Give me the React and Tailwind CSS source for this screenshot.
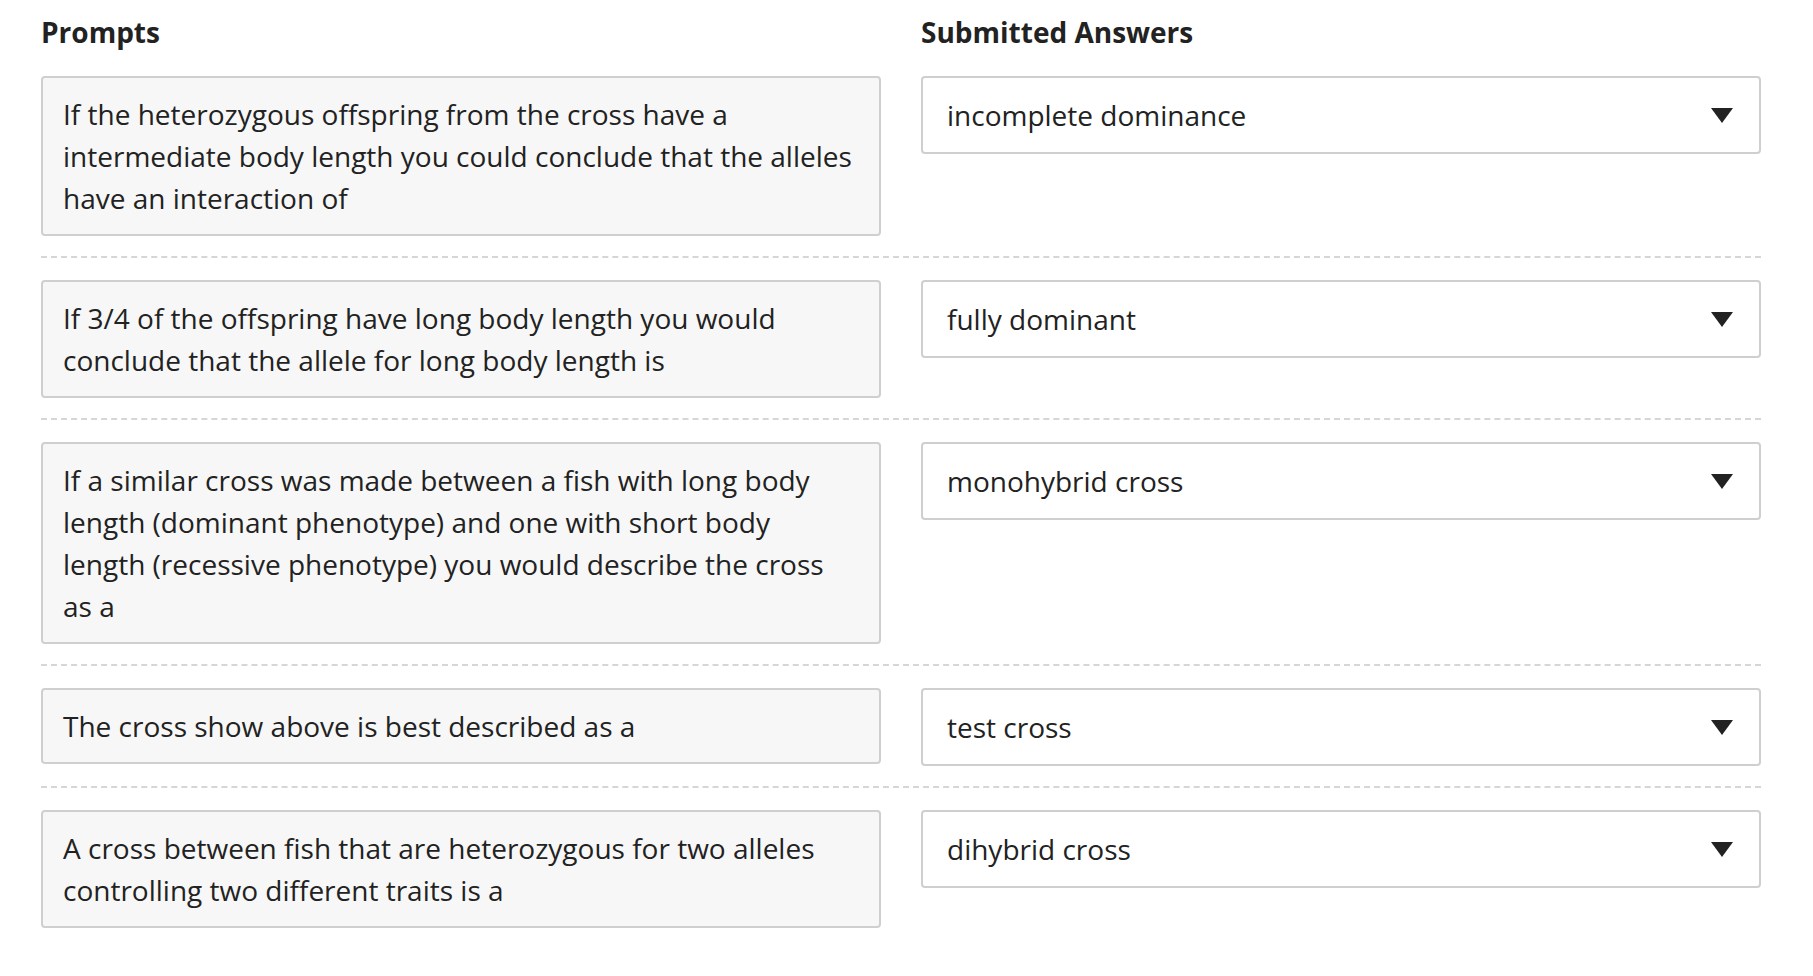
const rows = [
  {
    prompt:
      'If the heterozygous offspring from the cross have a intermediate body length you could conclude that the alleles have an interaction of',
    answer: 'incomplete dominance',
  },
  {
    prompt: 'If 3/4 of the offspring have long body length you would conclude that the allele for long body length is',
    answer: 'fully dominant',
  },
  {
    prompt:
      'If a similar cross was made between a fish with long body length (dominant phenotype) and one with short body length (recessive phenotype) you would describe the cross as a',
    answer: 'monohybrid cross',
  },
  {
    prompt: 'The cross show above is best described as a',
    answer: 'test cross',
  },
  {
    prompt: 'A cross between fish that are heterozygous for two alleles controlling two different traits is a',
    answer: 'dihybrid cross',
  },
];

function Caret() {
  return (
    <svg width="22" height="15" viewBox="0 0 22 15" className="shrink-0">
      <path d="M0 0 L22 0 L11 15 Z" fill="#222" />
    </svg>
  );
}

export default function App() {
  return (
    <div className="min-h-screen bg-white text-[#222] font-['Open_Sans',sans-serif]">
      <div className="w-[1720px] ml-[41px]">
        <div className="grid grid-cols-2 gap-10 pt-[14px] pb-[26px]">
          <h2 className="text-[28px] font-bold leading-[36px]">Prompts</h2>
          <h2 className="text-[28px] font-bold leading-[36px]">Submitted Answers</h2>
        </div>

        {rows.map((row, i) => (
          <div
            key={i}
            className={
              i < rows.length - 1
                ? 'grid grid-cols-2 gap-10 items-start pb-[20px] mb-[22px] border-b-2 border-dashed border-[#d6d6d6]'
                : 'grid grid-cols-2 gap-10 items-start'
            }
          >
            <div className="bg-[#f7f7f7] border-2 border-[#cfcfcf] rounded-[4px] pl-[20px] pr-[26px] py-[15px] text-[28px] leading-[42px]">
              {row.prompt}
            </div>
            <div className="bg-white border-2 border-[#cfcfcf] rounded-[4px] pl-[24px] pr-[26px] py-4 flex items-center justify-between text-[28px] leading-[42px]">
              <span>{row.answer}</span>
              <Caret />
            </div>
          </div>
        ))}
      </div>
    </div>
  );
}
